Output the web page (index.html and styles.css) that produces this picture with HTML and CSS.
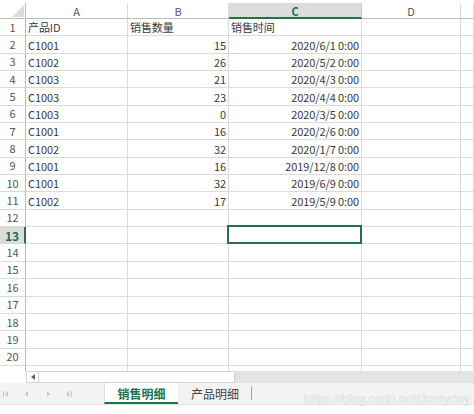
FILE: index.html
```html
<!DOCTYPE html>
<html>
<head>
<meta charset="utf-8">
<link rel="stylesheet" href="styles.css">
</head>
<body>
<div class="top"></div>
<div class="sheet">
  <div class="row head">
    <div class="c rh corner"><svg width="12" height="12" viewBox="0 0 12 12"><polygon points="12,0 12,12 0,12" fill="#dcdcdc"/></svg></div>
    <div class="c ch">A</div>
    <div class="c ch">B</div>
    <div class="c ch sel">C</div>
    <div class="c ch">D</div>
    <div class="c ch"></div>
  </div>
  <div class="row"><div class="c rh">1</div><div class="c">产品ID</div><div class="c">销售数量</div><div class="c">销售时间</div><div class="c"></div><div class="c"></div></div>
  <div class="row"><div class="c rh">2</div><div class="c">C1001</div><div class="c r">15</div><div class="c r">2020/6/1 0:00</div><div class="c"></div><div class="c"></div></div>
  <div class="row"><div class="c rh">3</div><div class="c">C1002</div><div class="c r">26</div><div class="c r">2020/5/2 0:00</div><div class="c"></div><div class="c"></div></div>
  <div class="row"><div class="c rh">4</div><div class="c">C1003</div><div class="c r">21</div><div class="c r">2020/4/3 0:00</div><div class="c"></div><div class="c"></div></div>
  <div class="row"><div class="c rh">5</div><div class="c">C1003</div><div class="c r">23</div><div class="c r">2020/4/4 0:00</div><div class="c"></div><div class="c"></div></div>
  <div class="row"><div class="c rh">6</div><div class="c">C1003</div><div class="c r">0</div><div class="c r">2020/3/5 0:00</div><div class="c"></div><div class="c"></div></div>
  <div class="row"><div class="c rh">7</div><div class="c">C1001</div><div class="c r">16</div><div class="c r">2020/2/6 0:00</div><div class="c"></div><div class="c"></div></div>
  <div class="row"><div class="c rh">8</div><div class="c">C1002</div><div class="c r">32</div><div class="c r">2020/1/7 0:00</div><div class="c"></div><div class="c"></div></div>
  <div class="row"><div class="c rh">9</div><div class="c">C1001</div><div class="c r">16</div><div class="c r">2019/12/8 0:00</div><div class="c"></div><div class="c"></div></div>
  <div class="row"><div class="c rh">10</div><div class="c">C1001</div><div class="c r">32</div><div class="c r">2019/6/9 0:00</div><div class="c"></div><div class="c"></div></div>
  <div class="row"><div class="c rh">11</div><div class="c">C1002</div><div class="c r">17</div><div class="c r">2019/5/9 0:00</div><div class="c"></div><div class="c"></div></div>
  <div class="row"><div class="c rh">12</div><div class="c"></div><div class="c"></div><div class="c"></div><div class="c"></div><div class="c"></div></div>
  <div class="row"><div class="c rh rsel">13</div><div class="c"></div><div class="c"></div><div class="c active"></div><div class="c"></div><div class="c"></div></div>
  <div class="row"><div class="c rh">14</div><div class="c"></div><div class="c"></div><div class="c"></div><div class="c"></div><div class="c"></div></div>
  <div class="row"><div class="c rh">15</div><div class="c"></div><div class="c"></div><div class="c"></div><div class="c"></div><div class="c"></div></div>
  <div class="row"><div class="c rh">16</div><div class="c"></div><div class="c"></div><div class="c"></div><div class="c"></div><div class="c"></div></div>
  <div class="row"><div class="c rh">17</div><div class="c"></div><div class="c"></div><div class="c"></div><div class="c"></div><div class="c"></div></div>
  <div class="row"><div class="c rh">18</div><div class="c"></div><div class="c"></div><div class="c"></div><div class="c"></div><div class="c"></div></div>
  <div class="row"><div class="c rh">19</div><div class="c"></div><div class="c"></div><div class="c"></div><div class="c"></div><div class="c"></div></div>
  <div class="row"><div class="c rh">20</div><div class="c"></div><div class="c"></div><div class="c"></div><div class="c"></div><div class="c"></div></div>
  <div class="row"><div class="c rh">21</div><div class="c"></div><div class="c"></div><div class="c"></div><div class="c"></div><div class="c"></div></div>
</div>
<div class="hscroll">
  <div class="hs-gap"></div>
  <div class="hs-btn"><svg width="4" height="6" viewBox="0 0 4 6"><polygon points="4,0 4,6 0,3" fill="#606060"/></svg></div>
  <div class="hs-thumb"></div>
  <div class="hs-track"></div>
</div>
<div class="tabs">
  <div class="nav">
    <svg width="6" height="6" viewBox="0 0 6 6"><rect x="0" y="0" width="1" height="6" fill="#c8c8c8"/><polygon points="5,0 5,6 2,3" fill="#c8c8c8"/></svg>
    <svg width="6" height="6" viewBox="0 0 6 6"><polygon points="4,0 4,6 1,3" fill="#c8c8c8"/></svg>
    <svg width="6" height="6" viewBox="0 0 6 6"><polygon points="2,0 2,6 5,3" fill="#c8c8c8"/></svg>
    <svg width="6" height="6" viewBox="0 0 6 6"><polygon points="1,0 1,6 4,3" fill="#c8c8c8"/><rect x="5" y="0" width="1" height="6" fill="#c8c8c8"/></svg>
  </div>
  <div class="tab on">销售明细</div>
  <div class="tab">产品明细</div>
  <div class="wm">https://blog.csdn.net/Jmayday</div>
</div>
<div class="foot"></div>
</body>
</html>
```

FILE: styles.css
```css
* { box-sizing: border-box; }
html, body { margin: 0; padding: 0; background: #fff; }
body {
  width: 474px;
  height: 414px;
  overflow: hidden;
  font-family: "Noto Sans CJK SC", "Noto Sans", sans-serif;
  font-size: 11px;
  color: #3a3a3a;
}
.top { height: 3px; background: #fff; }
.sheet {
  height: 368px;
  overflow: hidden;
}
.row {
  display: grid;
  grid-template-columns: 26px 102px 101px 133px 99px 1fr;
  height: 17.35px;
}
.row.head { height: 16px; }
.c {
  border-right: 1px solid #dadada;
  border-bottom: 1px solid #dadada;
  display: flex;
  align-items: flex-end;
  padding: 0 2px 1px 2px;
  white-space: nowrap;
  line-height: 13px;
  position: relative;
  letter-spacing: -0.1px;
}
.c.r { justify-content: flex-end; padding-right: 2px; }
.c.rh {
  justify-content: center;
  align-items: center;
  padding: 0;
  color: #555;
  border-right-color: #bcbcbc;
  border-bottom-color: #dadada;
}
.head .c {
  justify-content: center;
  align-items: center;
  padding: 1px 0 0 0;
  line-height: 12px;
  color: #555;
  border-bottom-color: #bcbcbc;
  border-right-color: #dadada;
}
.head .corner {
  justify-content: flex-end;
  align-items: flex-end;
  padding: 0 1px 1px 0;
  border-right-color: #bcbcbc;
}
.head .ch.sel {
  background: #dcdcdc;
  color: #217346;
  font-weight: bold;
  border-bottom: 2px solid #217346;
  border-right-color: #c8c8c8;
}
.c.rh.rsel {
  background: #dcdcdc;
  color: #217346;
  font-weight: bold;
  border-right: 2px solid #217346;
  font-size: 12px;
}
.c.active::after {
  content: "";
  position: absolute;
  left: -2px;
  top: -2px;
  right: -1px;
  bottom: -1px;
  border: 2px solid #217346;
}
.hscroll {
  height: 12px;
  display: flex;
  background: #fff;
}
.hs-gap { width: 26px; background: #fff; }
.hs-btn {
  width: 12px;
  border: 1px solid #d4d4d4;
  border-right: none;
  background: #fff;
  display: flex;
  align-items: center;
  justify-content: center;
}
.hs-thumb {
  width: 197px;
  background: #fff;
  border: 1px solid #d4d4d4;
}
.hs-track {
  flex: 1;
  background: #e3e3e3;
}
.tabs {
  height: 22px;
  background: #f3f3f3;
  display: flex;
  align-items: stretch;
  position: relative;
  border-bottom: 1px solid #e2e2e2;
}
.nav {
  width: 104px;
  display: flex;
  align-items: center;
  padding-left: 3px;
  gap: 15px;
}
.tab {
  width: 74px;
  display: flex;
  align-items: center;
  justify-content: center;
  font-size: 12px;
  color: #444;
  position: relative;
}
.tab.on {
  background: #fff;
  color: #217346;
  font-weight: bold;
  border-left: 1px solid #e0e0e0;
  border-bottom: 2px solid #217346;
  padding-top: 1px;
}
.tab:not(.on)::after {
  content: "";
  position: absolute;
  right: 0;
  top: 3px;
  bottom: 4px;
  border-right: 1px solid #a8a8a8;
}
.wm {
  position: absolute;
  left: 304px;
  top: 8px;
  font-family: "Liberation Sans", sans-serif;
  font-size: 13px;
  color: #e9e9e9;
  text-shadow: 0 0 1px #d0d0d0;
  letter-spacing: -0.2px;
}
.foot { height: 9px; background: #fff; }
```
